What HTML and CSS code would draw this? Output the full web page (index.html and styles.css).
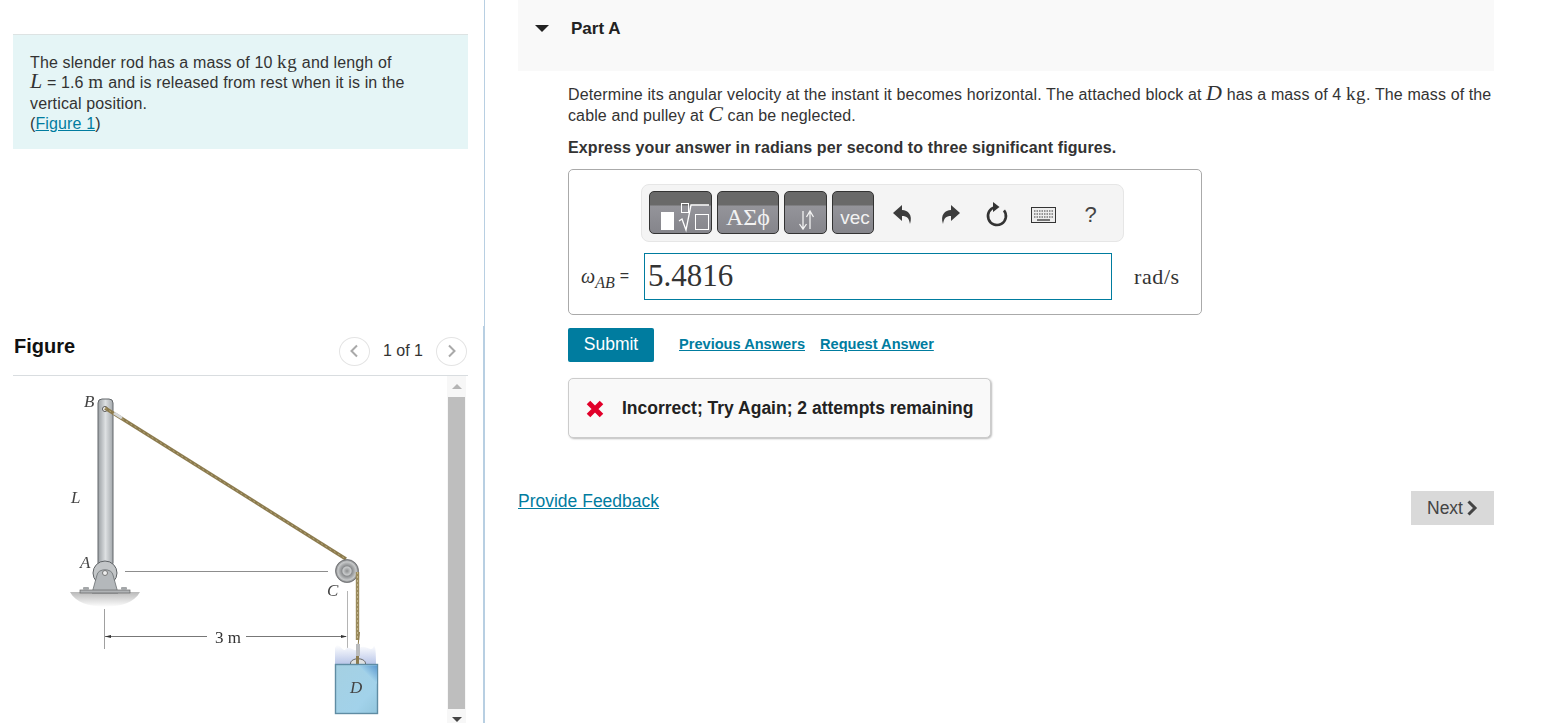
FILE: index.html
```html
<!DOCTYPE html>
<html lang="en">
<head>
    <meta charset="UTF-8">
    <title>Part A</title>
    <link rel="stylesheet" href="styles.css">
</head>
<body>
    <div class="left">
        <div class="intro">
            The slender rod has a mass of 10 <span class="unit">kg</span> and lengh of<br>
            <span class="var">L</span> = 1.6 <span class="unit">m</span> and is released from rest when it is in the<br>
            vertical position.<br>
            (<a href="#">Figure 1</a>)
        </div>
        <div class="figure-head">
            <h2>Figure</h2>
            <div class="pager">
                <span class="pager-btn">
                    <svg width="10" height="14" viewBox="0 0 10 14"><path d="M8 1.5 2.5 7 8 12.5" fill="none" stroke="#a9a9a9" stroke-width="2"/></svg>
                </span>
                <span class="pager-text">1 of 1</span>
                <span class="pager-btn">
                    <svg width="10" height="14" viewBox="0 0 10 14"><path d="M2 1.5 7.5 7 2 12.5" fill="none" stroke="#a9a9a9" stroke-width="2"/></svg>
                </span>
            </div>
        </div>
        <div class="figure-area">
            <svg class="figure" width="434" height="347" viewBox="13 376 434 347">
                <defs>
                    <linearGradient id="rod" x1="0" x2="1" y1="0" y2="0">
                        <stop offset="0" stop-color="#9a9fa3"/>
                        <stop offset="0.5" stop-color="#dde0e2"/>
                        <stop offset="1" stop-color="#a3a8ac"/>
                    </linearGradient>
                    <linearGradient id="ground" x1="0" x2="0" y1="0" y2="1">
                        <stop offset="0" stop-color="#b9b9b9"/>
                        <stop offset="1" stop-color="#ffffff"/>
                    </linearGradient>
                    <linearGradient id="block" x1="0" x2="1" y1="0" y2="1">
                        <stop offset="0" stop-color="#a5d0e2"/>
                        <stop offset="0.7" stop-color="#a2d2ea"/>
                        <stop offset="1" stop-color="#93c6dd"/>
                    </linearGradient>
                    <linearGradient id="glow" x1="0" x2="0" y1="0" y2="1">
                        <stop offset="0" stop-color="#ffffff"/>
                        <stop offset="1" stop-color="#b9c6e8"/>
                    </linearGradient>
                    <linearGradient id="corner" x1="0" x2="1" y1="1" y2="0">
                        <stop offset="0.5" stop-color="#a2d2ea"/>
                        <stop offset="1" stop-color="#5b98cf"/>
                    </linearGradient>
                    <radialGradient id="wheel">
                        <stop offset="0" stop-color="#8d8f90"/>
                        <stop offset="0.35" stop-color="#c9cbcc"/>
                        <stop offset="0.45" stop-color="#8a8c8e"/>
                        <stop offset="0.8" stop-color="#c7c9ca"/>
                        <stop offset="1" stop-color="#77797b"/>
                    </radialGradient>
                </defs>

                <!-- ground and support -->
                <path d="M70 592H140C134 603 122 606 105 607C88 606 76 603 70 592Z" fill="url(#ground)"/>
                <rect x="98" y="399" width="15" height="168" rx="4" fill="url(#rod)" stroke="#63676a"/>
                <circle cx="105" cy="409" r="2.5" fill="#fff" stroke="#555"/>
                <circle cx="105" cy="573" r="12" fill="#c3c6c8" stroke="#5f6366"/>
                <path d="M92 593 97 575C98 568 112 568 113 575L118 593Z" fill="#b4b8bb" stroke="#6a6e71" stroke-width="0.8"/>
                <circle cx="105" cy="573" r="2.5" fill="#eee" stroke="#777"/>
                <rect x="80" y="590" width="50" height="3" fill="#b0b3b5" stroke="#666" stroke-width="0.7"/>
                <rect x="83" y="587" width="6" height="3" rx="1" fill="#a4a7a9"/>
                <rect x="121" y="587" width="6" height="3" rx="1" fill="#a4a7a9"/>

                <!-- dimensions -->
                <line x1="125" y1="571.5" x2="328" y2="571.5" stroke="#8d8d8d"/>
                <line x1="104.500" y1="609" x2="104.500" y2="649" stroke="#a0a0a0"/>
                <line x1="347.500" y1="591" x2="347.500" y2="649" stroke="#b4b4b4"/>
                <line x1="105" y1="636.500" x2="207" y2="636.500" stroke="#777"/>
                <line x1="246" y1="636.500" x2="346" y2="636.500" stroke="#777"/>
                <path d="M105 636.500 111 635V638ZM347 636.500 341 635V638Z" fill="#333"/>

                <!-- cable -->
                <line x1="105" y1="408" x2="346" y2="559" stroke="#8c7b4e" stroke-width="3.400"/>
                <line x1="105" y1="408" x2="346" y2="559" stroke="#b5a679" stroke-width="1" stroke-dasharray="2 3"/>
                <line x1="114" y1="413" x2="122" y2="418" stroke="#d5d7d8" stroke-width="3"/>
                <circle cx="347" cy="571" r="11.500" fill="url(#wheel)" stroke="#6d6f71" stroke-width="0.8"/>
                <line x1="357.500" y1="572" x2="357.500" y2="640" stroke="#9a8a5c" stroke-width="3.400"/>
                <line x1="357.500" y1="572" x2="357.500" y2="640" stroke="#c2b48a" stroke-width="1" stroke-dasharray="2 2"/>
                <line x1="359.500" y1="632" x2="358" y2="646" stroke="#8c7b4e" stroke-width="1"/>

                <!-- block -->
                <path d="M335 664V648C338 640 341 650 345 650C349 644 353 652 358 650C362 642 370 652 373 648C375 642 376 650 376 664Z" fill="url(#glow)"/>
                <rect x="356" y="644" width="4" height="12" fill="#b9bbbd"/>
                <path d="M350.500 664C350 657 366 657 365.500 664" fill="#dfe1e2" stroke="#666" stroke-width="1"/>
                <line x1="357.500" y1="656" x2="357.500" y2="664" stroke="#8c7b4e" stroke-width="3"/>
                <rect x="335.500" y="664.500" width="42" height="49" fill="url(#block)" stroke="#5f8ca3" stroke-width="1.400"/>
                <path d="M358 665.500H377V684Z" fill="url(#corner)"/>

                <text class="fig-label" x="84" y="407">B</text>
                <text class="fig-label" x="71" y="503">L</text>
                <text class="fig-label" x="80" y="568">A</text>
                <text class="fig-label" x="327" y="596">C</text>
                <text class="fig-label" x="350" y="693">D</text>
                <text class="fig-dim" x="215" y="643">3 m</text>
            </svg>
            <div class="scrollbar">
                <span class="tri-up"></span>
                <span class="thumb"></span>
                <span class="tri-down"></span>
            </div>
        </div>
    </div>

    <div class="right">
        <div class="part-head">
            <span class="caret"></span>
            <span class="part-title">Part A</span>
        </div>
        <div class="part-body">
            <p class="question">Determine its angular velocity at the instant it becomes horizontal. The attached block at <span class="var">D</span> has a mass of 4 <span class="unit">kg</span>. The mass of the<br>cable and pulley at <span class="var">C</span> can be neglected.</p>
            <p class="express">Express your answer in radians per second to three significant figures.</p>

            <div class="answer-box">
                <div class="toolbar">
                    <span class="tool tool-a">
                        <svg width="61" height="41" viewBox="0 0 61 41">
                            <rect x="11" y="20" width="13" height="18" fill="#fff"/>
                            <rect x="31.500" y="11.500" width="7" height="9" fill="none" stroke="#fff"/>
                            <path d="M29 29 32 27 36 38 41 13H59" fill="none" stroke="#fff" stroke-width="1.300"/>
                            <rect x="45.500" y="22.500" width="13" height="15" fill="none" stroke="#fff"/>
                        </svg>
                    </span>
                    <span class="tool tool-b">AΣϕ</span>
                    <span class="tool tool-c">
                        <svg width="41" height="41" viewBox="0 0 41 41">
                            <path d="M18 19V36M14.500 32 18 37 21.500 32M25 37V20M21.500 25 25 19 28.500 25" fill="none" stroke="#f2f2f2" stroke-width="1.300"/>
                        </svg>
                    </span>
                    <span class="tool tool-d">vec</span>
                    <span class="action">
                        <svg width="20" height="20" viewBox="0 0 20 20"><path d="M0 8 9 0V5C15 5 20 10 17 19 16 13 14 11 9 11V16Z" fill="#3c3c3c"/></svg>
                    </span>
                    <span class="action">
                        <svg width="20" height="20" viewBox="0 0 20 20"><path d="M20 8 11 0V5C5 5 0 10 3 19 4 13 6 11 11 11V16Z" fill="#3c3c3c"/></svg>
                    </span>
                    <span class="action">
                        <svg width="24" height="26" viewBox="0 0 24 26"><path d="M10 5.200A9 9 0 1 0 19 8.400" fill="none" stroke="#333" stroke-width="2.600"/><path d="M8 0V10L14.500 5Z" fill="#333"/></svg>
                    </span>
                    <span class="action">
                        <svg width="25" height="16" viewBox="0 0 25 16"><rect x="0.500" y="0.500" width="24" height="15" fill="#ededed" stroke="#333"/><path d="M3 4H22M3 7H22M3 10H22" stroke="#777" stroke-width="1.300" stroke-dasharray="1.500 1"/><path d="M6 13H19" stroke="#333" stroke-width="1.300"/></svg>
                    </span>
                    <span class="action help">?</span>
                </div>
                <div class="answer-row">
                    <span class="answer-label"><i>ω<sub>AB</sub></i> <span class="eq">=</span></span>
                    <span class="answer-input">5.4816</span>
                    <span class="answer-unit">rad/s</span>
                </div>
            </div>

            <div class="actions">
                <a class="submit">Submit</a>
                <a class="action-link" href="#">Previous Answers</a>
                <a class="action-link" href="#">Request Answer</a>
            </div>

            <div class="feedback">
                <svg width="18" height="18" viewBox="0 0 18 18"><path d="M2.500 2.500 15.500 15.500M15.500 2.500 2.500 15.500" stroke="#e1002a" stroke-width="5"/></svg>
                <span>Incorrect; Try Again; 2 attempts remaining</span>
            </div>
        </div>
        <div class="bottom-row">
            <a class="provide" href="#">Provide Feedback</a>
            <a class="next">Next
                <svg width="12" height="16" viewBox="0 0 12 16"><path d="M2.500 1.500 9 8 2.500 14.500" fill="none" stroke="#444" stroke-width="3"/></svg>
            </a>
        </div>
    </div>
</body>
</html>
```

FILE: styles.css
```css
html, body {
    height: 723px;
    overflow: hidden;
}
body {
    margin: 0;
    display: flex;
    font-family: "Liberation Sans", Arial, sans-serif;
    font-size: 16px;
    color: #333;
    background: #fff;
}
a {
    color: #007c9f;
}

/* left column */
.left {
    position: relative;
    width: 471px;
    padding-left: 13px;
    border-right: 1px solid #b8cfe2;
}
/* divider gets thicker next to the figure */
.left::after {
    content: "";
    position: absolute;
    top: 326px;
    bottom: 0;
    right: 0;
    width: 1px;
    background: #b8cfe2;
}
.intro {
    width: 438px;
    height: 96px;
    margin: 34px 0 0 0;
    padding: 18px 0 0 17px;
    border-top: 1px solid #dde3e3;
    background: #e5f5f6;
    line-height: 20.4px;
    letter-spacing: 0.13px;
}
.var {
    font-family: "Liberation Serif", serif;
    font-style: italic;
    font-size: 22px;
    line-height: 0;
}
.unit {
    font-family: "Liberation Serif", serif;
    font-size: 19px;
    letter-spacing: 0.6px;
    line-height: 0;
}
.figure-head {
    width: 455px;
    height: 49px;
    margin-top: 177px;
    display: flex;
    justify-content: space-between;
    align-items: center;
    border-bottom: 1px solid #d9dde0;
}
.figure-head h2 {
    margin: 0 0 9px 1px;
    font-size: 20px;
    color: #111;
}
.pager {
    display: flex;
    align-items: center;
    margin-right: 1px;
    margin-top: 1px;
}
.pager-btn {
    width: 29px;
    height: 27px;
    display: flex;
    align-items: center;
    justify-content: center;
    border: 1px solid #e4e4e4;
    border-radius: 50%;
}
.pager-text {
    margin: 0 13px;
}
.figure-area {
    width: 455px;
    display: flex;
}
.figure {
    display: block;
    flex: none;
    filter: blur(0.4px);
}
.fig-label {
    font-family: "Liberation Serif", serif;
    font-style: italic;
    font-size: 17px;
    fill: #444;
}
.fig-dim {
    font-family: "Liberation Serif", serif;
    font-size: 17px;
    fill: #333;
}
.scrollbar {
    width: 19px;
    height: 347px;
    display: flex;
    flex-direction: column;
    align-items: center;
    background: #f7f7f7;
}
.thumb {
    width: 17px;
    height: 312px;
    background: #bebebe;
}
.tri-up, .tri-down {
    width: 0;
    height: 0;
    border-left: 5px solid transparent;
    border-right: 5px solid transparent;
}
.tri-up {
    margin: 8px 0 8px;
    border-bottom: 5px solid #b4b4b4;
}
.tri-down {
    margin-top: 8px;
    border-top: 5px solid #444;
}

/* right column */
.right {
    width: 976px;
    margin-left: 33px;
}
.part-head {
    height: 71px;
    display: flex;
    align-items: flex-start;
    background: #f9f9f9;
}
.caret {
    width: 0;
    height: 0;
    margin: 25px 22px 0 17px;
    border-left: 7px solid transparent;
    border-right: 7px solid transparent;
    border-top: 7px solid #222;
}
.part-title {
    margin-top: 19px;
    font-size: 17px;
    font-weight: bold;
    color: #222;
}
.part-body {
    padding-left: 50px;
}
.question {
    margin: 13px 0 0;
    line-height: 21px;
    white-space: nowrap;
    letter-spacing: 0.115px;
}
.express {
    margin: 11px 0 0;
    line-height: 21px;
    font-weight: bold;
    letter-spacing: 0.11px;
}
.answer-box {
    width: 632px;
    height: 144px;
    margin-top: 11px;
    border: 1px solid #aaa;
    border-radius: 5px;
}
.toolbar {
    width: 483px;
    height: 58px;
    margin: 14px 0 0 72px;
    padding: 6px 0 0 7px;
    display: flex;
    box-sizing: border-box;
    background: #f4f4f4;
    border: 1px solid #e6e6e6;
    border-radius: 8px;
}
.tool {
    height: 41px;
    margin-right: 5px;
    flex: none;
    border: 1px solid #333;
    border-radius: 5px;
    background: linear-gradient(#696969 0, #696969 13px, #94949a 14px, #85858b 100%);
    color: #f2f2f2;
    display: flex;
    align-items: center;
    justify-content: center;
    overflow: hidden;
}
.tool svg {
    display: block;
    flex: none;
}
.tool-a { width: 61px; }
.tool-b {
    width: 60px;
    padding-top: 10px;
    height: 31px;
    font-family: "Liberation Serif", serif;
    font-size: 24px;
}
.tool-c { width: 41px; }
.tool-d {
    width: 36px;
    height: 30px;
    padding: 11px 0 0 4px;
    font-size: 19px;
}
.action {
    width: 47px;
    flex: none;
    height: 41px;
    display: flex;
    align-items: center;
    justify-content: center;
    padding-top: 6px;
    box-sizing: border-box;
}
.help {
    font-size: 22px;
    color: #444;
    padding-bottom: 0;
}
.answer-row {
    display: flex;
    align-items: center;
    margin-top: 11px;
    padding-left: 12px;
}
.answer-label {
    width: 63px;
    font-family: "Liberation Serif", serif;
    font-size: 20px;
    white-space: nowrap;
}
.answer-label sub {
    font-size: 16px;
    line-height: 0;
}
.eq {
    font-family: "Liberation Sans", sans-serif;
    font-size: 16px;
    vertical-align: 2px;
}
.answer-input {
    width: 468px;
    height: 47px;
    box-sizing: border-box;
    padding-left: 3px;
    border: 1px solid #007c9f;
    font-family: "Liberation Serif", serif;
    font-size: 31px;
    line-height: 44px;
}
.answer-unit {
    margin-left: 22px;
    font-family: "Liberation Serif", serif;
    font-size: 22px;
    letter-spacing: 0.6px;
}
.actions {
    display: flex;
    align-items: center;
    margin-top: 13px;
}
.submit {
    width: 86px;
    height: 34px;
    line-height: 32px;
    text-align: center;
    font-size: 17.500px;
    background: #007c9f;
    color: #fff;
    border-radius: 2px;
    margin-right: 25px;
}
.action-link {
    font-size: 14.600px;
    font-weight: bold;
    margin-right: 15px;
    margin-bottom: 2px;
}
.feedback {
    width: 423px;
    height: 60px;
    margin-top: 16px;
    box-sizing: border-box;
    padding: 1px 0 0 17px;
    display: flex;
    align-items: center;
    gap: 18px;
    background: #f9f9f9;
    border: 1px solid #ccc;
    border-radius: 5px;
    box-shadow: 1px 1px 2px #bbb;
    font-size: 17.500px;
    font-weight: bold;
    color: #222;
    white-space: nowrap;
}
.feedback svg {
    flex: none;
}
.bottom-row {
    display: flex;
    justify-content: space-between;
    align-items: flex-start;
    margin-top: 53px;
}
.provide {
    font-size: 17.500px;
    line-height: 20px;
}
.next {
    width: 83px;
    height: 34px;
    display: flex;
    align-items: center;
    justify-content: center;
    gap: 3px;
    background: #d9d9d9;
    font-size: 17.500px;
    color: #444;
}
```
